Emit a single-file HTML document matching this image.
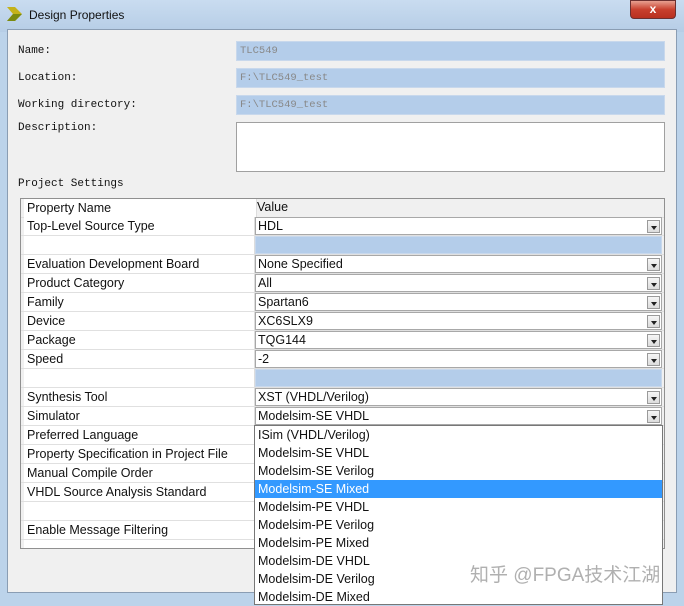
<!DOCTYPE html>
<html><head><style>
*{margin:0;padding:0;box-sizing:border-box}
body{width:684px;height:599px;overflow:hidden;background:#bcd3ea;font-family:"Liberation Sans",sans-serif;position:relative}
.abs{position:absolute}
.title{left:0;top:0;width:684px;height:32px;background:linear-gradient(#c9dcf0,#b6cde6)}
.panel{left:7px;top:29px;width:670px;height:564px;background:#f0f0f0;border:1px solid #8a9db3}
.lbl{font-family:"Liberation Mono",monospace;font-size:11px;color:#111;left:18px}
.fld{left:236px;width:429px;height:20px;background:#b4cdea;border:1px solid #c8d8ec;font-family:"Liberation Mono",monospace;font-size:10.5px;color:#888;padding:3px 3px 0}
.tbl{left:20px;top:198px;width:645px;height:351px;background:#f0f0f0;border:1px solid #909090}
.row{position:absolute;left:0;width:643px;height:19px;border-bottom:1px solid #e0e0e0;font-size:12.5px;color:#111}
.n{position:absolute;left:3px;background:#fff;width:231px;height:18px;top:0;padding:2px 0 0 3px;border-right:1px solid #ddd}
.v{position:absolute;left:234px;top:0;width:407px;height:18px;background:#fff;border:1px solid #a8a8a8;padding:0 0 0 2px;line-height:16px}
.v i{position:absolute;right:1px;top:2px;width:13px;height:13px;background:linear-gradient(#f6f6f6,#dcdcdc);border:1px solid #9a9a9a}
.v i:after{content:"";position:absolute;left:3px;top:5px;border:3px solid transparent;border-top:4px solid #222}
.blue{background:#b4cdea;border:1px solid #c8d8ec}
.dd{left:254px;top:425px;width:409px;height:180px;background:#fff;border:1px solid #777;font-size:12.5px;color:#111}
.dd div{height:18px;line-height:18px;padding-left:3px}
.sel{background:#3399ff;color:#fff}
</style></head><body>
<div class="abs title"></div>
<svg class="abs" style="left:7px;top:6px" width="16" height="16"><polygon points="0,1 8,1 15,8 8,15 0,15 6,8" fill="#c4b21a"/><polygon points="0,15 8,15 15,8 6,8" fill="#7a8a10"/></svg>
<div class="abs" style="left:29px;top:8px;font-size:12px;color:#111">Design Properties</div>
<div class="abs" style="left:630px;top:0;width:46px;height:19px;border-radius:0 0 4px 4px;background:linear-gradient(#e8a090,#c8402e 50%,#b83020);border:1px solid #6b3030;color:#fff;font-weight:bold;font-size:12px;text-align:center;line-height:17px">x</div>
<div class="abs panel"></div>
<div class="abs lbl" style="top:45px">Name:</div>
<div class="abs lbl" style="top:72px">Location:</div>
<div class="abs lbl" style="top:99px">Working directory:</div>
<div class="abs lbl" style="top:122px">Description:</div>
<div class="abs lbl" style="top:178px">Project Settings</div>
<div class="abs fld" style="top:41px">TLC549</div>
<div class="abs fld" style="top:68px">F:\TLC549_test</div>
<div class="abs fld" style="top:95px">F:\TLC549_test</div>
<div class="abs" style="left:236px;top:122px;width:429px;height:50px;background:#fff;border:1px solid #a0a0a0"></div>
<div class="abs tbl">
<div class="row" style="top:0;background:#f0f0f0"><div class="n" style="background:#fff;width:233px">Property Name</div><div style="position:absolute;left:236px;top:1px">Value</div></div>
<div class="row" style="top:18px"><div class="n">Top-Level Source Type</div><div class="v">HDL<i></i></div></div>
<div class="row" style="top:37px"><div class="n"></div><div class="v blue"></div></div>
<div class="row" style="top:56px"><div class="n">Evaluation Development Board</div><div class="v">None Specified<i></i></div></div>
<div class="row" style="top:75px"><div class="n">Product Category</div><div class="v">All<i></i></div></div>
<div class="row" style="top:94px"><div class="n">Family</div><div class="v">Spartan6<i></i></div></div>
<div class="row" style="top:113px"><div class="n">Device</div><div class="v">XC6SLX9<i></i></div></div>
<div class="row" style="top:132px"><div class="n">Package</div><div class="v">TQG144<i></i></div></div>
<div class="row" style="top:151px"><div class="n">Speed</div><div class="v">-2<i></i></div></div>
<div class="row" style="top:170px"><div class="n"></div><div class="v blue"></div></div>
<div class="row" style="top:189px"><div class="n">Synthesis Tool</div><div class="v">XST (VHDL/Verilog)<i></i></div></div>
<div class="row" style="top:208px"><div class="n">Simulator</div><div class="v">Modelsim-SE VHDL<i></i></div></div>
<div class="row" style="top:227px"><div class="n">Preferred Language</div></div>
<div class="row" style="top:246px"><div class="n">Property Specification in Project File</div></div>
<div class="row" style="top:265px"><div class="n">Manual Compile Order</div></div>
<div class="row" style="top:284px"><div class="n">VHDL Source Analysis Standard</div></div>
<div class="row" style="top:303px"><div class="n"></div></div>
<div class="row" style="top:322px"><div class="n">Enable Message Filtering</div></div>
<div class="row" style="top:341px;height:8px;border:0"><div class="n" style="height:8px"></div></div>
</div>
<div class="abs dd">
<div>ISim (VHDL/Verilog)</div><div>Modelsim-SE VHDL</div><div>Modelsim-SE Verilog</div><div class="sel">Modelsim-SE Mixed</div><div>Modelsim-PE VHDL</div><div>Modelsim-PE Verilog</div><div>Modelsim-PE Mixed</div><div>Modelsim-DE VHDL</div><div>Modelsim-DE Verilog</div><div>Modelsim-DE Mixed</div>
</div>
<div class="abs" style="left:470px;top:560px;font-family:'Liberation Sans','Noto Sans CJK SC',sans-serif;font-size:19px;color:rgba(150,150,150,0.75)">知乎 @FPGA技术江湖</div>
</body></html>
